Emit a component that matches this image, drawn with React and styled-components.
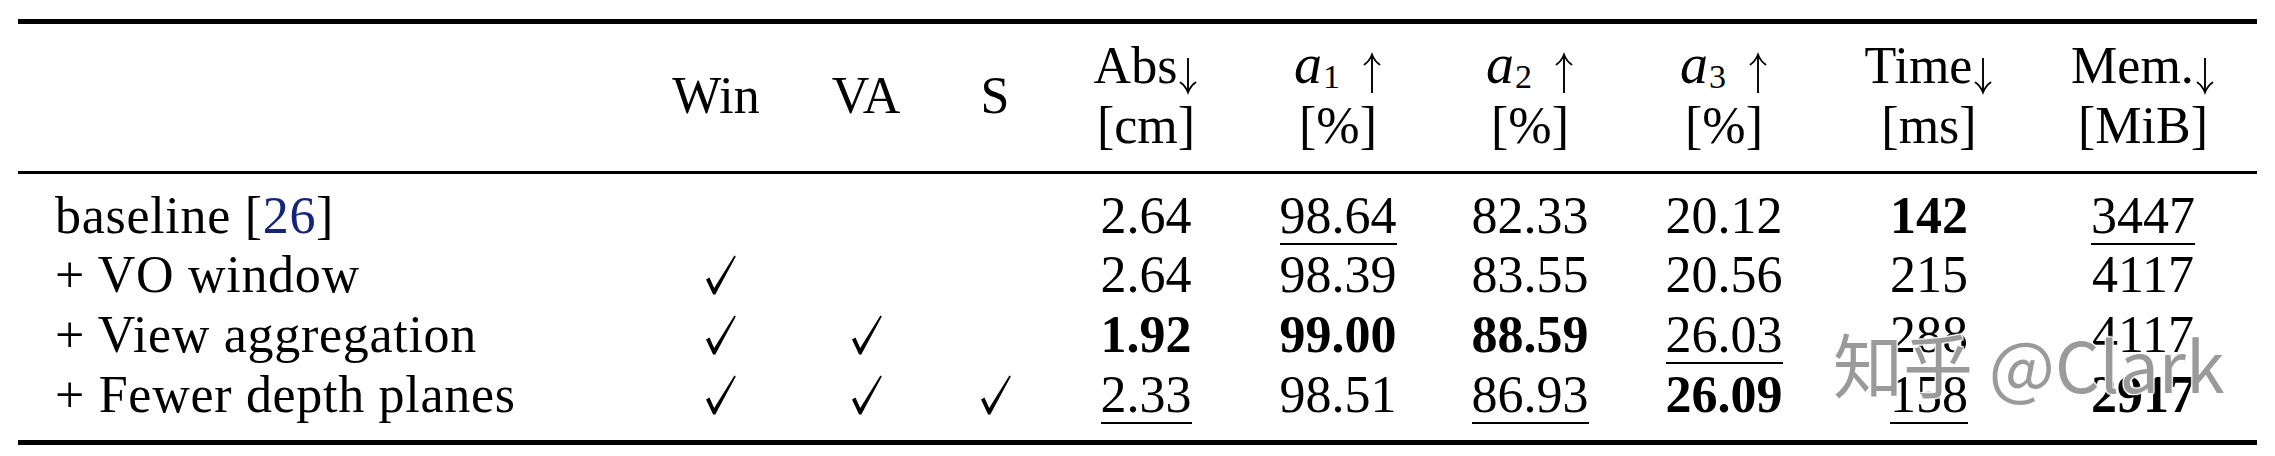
import React from "react";
import styled, { createGlobalStyle } from "styled-components";

const Global = createGlobalStyle`
  html, body { margin: 0; padding: 0; background: #fff; }
  body { font-family: "Liberation Serif", "Times New Roman", serif; color: #000; }
`;

const COLS = "623px 150px 150px 108px 194px 190px 194px 194px 216px 212px";
const LH = 59.7;

const Page = styled.div`
  position: relative;
  width: 2275px;
  height: 456px;
  box-sizing: border-box;
  padding: 19px 0 0 18px;
  overflow: hidden;
`;

const Table = styled.div`
  width: 2239px;
  border-top: 5px solid #000;
  border-bottom: 5px solid #000;
  font-size: 52px;
  line-height: ${LH}px;
`;

const Head = styled.div`
  display: grid;
  grid-template-columns: ${COLS};
  align-items: center;
  padding: 12px 0 15.6px;
  border-bottom: 3px solid #000;
`;

const Body = styled.div`
  padding: 11.6px 0 15.6px;
`;

const Row = styled.div`
  display: grid;
  grid-template-columns: ${COLS};
  height: ${LH}px;
`;

const Label = styled.div`
  padding-left: 37px;
  white-space: nowrap;
  letter-spacing: 0.7px;
`;

const Cell = styled.div`
  text-align: center;
  white-space: nowrap;
  font-weight: ${(p) => (p.$bold ? 700 : 400)};
`;

const Line = styled.div`
  display: block;
`;

const Cite = styled.span`
  color: #14247a;
`;

const MathI = styled.span`
  font-style: italic;
  font-size: 56px;
  line-height: 0;
`;

const Sub = styled.span`
  font-size: 34px;
  line-height: 0;
  vertical-align: -5px;
  margin-left: 1px;
`;

const ArrowSvg = styled.svg`
  display: inline-block;
  width: 20px;
  height: ${(p) => (p.$up ? 39 : 35)}px;
  vertical-align: -10px;
  margin-left: ${(p) => p.$gap || 0}px;
  overflow: visible;
`;

const Under = styled.span`
  display: inline-block;
  background-image: linear-gradient(#000, #000);
  background-repeat: no-repeat;
  background-size: 100% 2px;
  background-position: 0 57px;
`;

const CheckSvg = styled.svg`
  display: inline-block;
  width: 31px;
  height: 40px;
  vertical-align: -3px;
  margin-left: ${(p) => p.$shift || 0}px;
`;

const Watermark = styled.div`
  position: absolute;
  left: 1833px;
  top: 328px;
  font-family: "Noto Sans CJK SC", "Noto Sans", sans-serif;
  font-size: 70px;
  line-height: 1;
  white-space: nowrap;
  color: rgba(140, 140, 140, 0.88);
  text-shadow: 0 0 2px #fff, 1px 1px 1px #fff, -1px -1px 1px #fff, 1px -1px 1px #fff, -1px 1px 1px #fff;
  pointer-events: none;
`;

const Check = ({ shift }) => (
  <CheckSvg viewBox="0 0 31 40" aria-hidden="true" $shift={shift}>
    <path d="M1 24.5 L4.5 22.6 L9.2 33 L29.4 0.6 L30.8 1.5 L10.3 39.6 L8.1 39.6 Z" fill="#000" />
  </CheckSvg>
);

const Down = ({ gap }) => (
  <ArrowSvg viewBox="0 0 20 35" $gap={gap} aria-hidden="true">
    <path d="M10 0 L10 34" stroke="#000" strokeWidth="1.9" fill="none" />
    <path d="M2.5 24.5 Q7.5 28 10 34.5 Q12.5 28 17.5 24.5" stroke="#000" strokeWidth="1.8" fill="none" strokeLinecap="round" />
  </ArrowSvg>
);

const Up = ({ gap }) => (
  <ArrowSvg viewBox="0 0 20 39" $up $gap={gap} aria-hidden="true">
    <path d="M10 1 L10 39" stroke="#000" strokeWidth="1.9" fill="none" />
    <path d="M2.5 10.5 Q7.5 7 10 0.5 Q12.5 7 17.5 10.5" stroke="#000" strokeWidth="1.8" fill="none" strokeLinecap="round" />
  </ArrowSvg>
);

const headers = [
  { one: "Win" },
  { one: "VA" },
  { one: "S" },
  { top: <>Abs<Down gap={1} /></>, bot: "[cm]" },
  { top: <><MathI>a</MathI><Sub>1</Sub><Up gap={22} /></>, bot: "[%]" },
  { top: <><MathI>a</MathI><Sub>2</Sub><Up gap={22} /></>, bot: "[%]" },
  { top: <><MathI>a</MathI><Sub>3</Sub><Up gap={22} /></>, bot: "[%]" },
  { top: <>Time<Down gap={1} /></>, bot: "[ms]" },
  { top: <>Mem.<Down gap={1} /></>, bot: "[MiB]" },
];

const rows = [
  {
    label: <>baseline [<Cite>26</Cite>]</>,
    checks: [0, 0, 0],
    vals: [["2.64"], ["98.64", "u"], ["82.33"], ["20.12"], ["142", "b"], ["3447", "u"]],
  },
  {
    label: "+ VO window",
    checks: [1, 0, 0],
    vals: [["2.64"], ["98.39"], ["83.55"], ["20.56"], ["215"], ["4117"]],
  },
  {
    label: "+ View aggregation",
    checks: [1, 1, 0],
    vals: [["1.92", "b"], ["99.00", "b"], ["88.59", "b"], ["26.03", "u"], ["288"], ["4117"]],
  },
  {
    label: "+ Fewer depth planes",
    checks: [1, 1, 1],
    vals: [["2.33", "u"], ["98.51"], ["86.93", "u"], ["26.09", "b"], ["158", "u"], ["2917", "b"]],
  },
];

const checkShift = [8, 0, 0];

export default function App() {
  return (
    <>
      <Global />
      <Page>
        <Table>
          <Head>
            <Label />
            {headers.map((h, i) =>
              h.one ? (
                <Cell key={i}>{h.one}</Cell>
              ) : (
                <Cell key={i}>
                  <Line>{h.top}</Line>
                  <Line>{h.bot}</Line>
                </Cell>
              )
            )}
          </Head>
          <Body>
            {rows.map((r, ri) => (
              <Row key={ri}>
                <Label>{r.label}</Label>
                {r.checks.map((c, ci) => (
                  <Cell key={"c" + ci}>{c ? <Check shift={checkShift[ci]} /> : null}</Cell>
                ))}
                {r.vals.map(([v, s], vi) => (
                  <Cell key={"v" + vi} $bold={s === "b"}>
                    {s === "u" ? <Under>{v}</Under> : v}
                  </Cell>
                ))}
              </Row>
            ))}
          </Body>
        </Table>
        <Watermark>知乎 @Clark</Watermark>
      </Page>
    </>
  );
}
